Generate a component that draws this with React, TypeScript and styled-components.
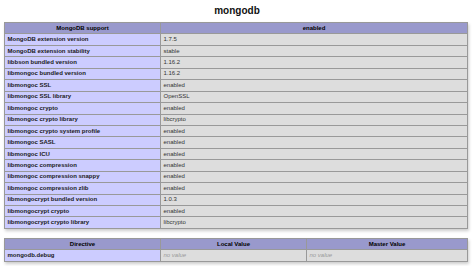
import styled, { createGlobalStyle } from 'styled-components';

const GlobalStyle = createGlobalStyle`
  html, body {
    margin: 0;
    padding: 0;
    background: #fff;
  }
  body {
    font-family: 'Liberation Sans', Arial, Helvetica, sans-serif;
    color: #222;
  }
`;

const rows: [string, string][] = [
  ['MongoDB extension version', '1.7.5'],
  ['MongoDB extension stability', 'stable'],
  ['libbson bundled version', '1.16.2'],
  ['libmongoc bundled version', '1.16.2'],
  ['libmongoc SSL', 'enabled'],
  ['libmongoc SSL library', 'OpenSSL'],
  ['libmongoc crypto', 'enabled'],
  ['libmongoc crypto library', 'libcrypto'],
  ['libmongoc crypto system profile', 'enabled'],
  ['libmongoc SASL', 'enabled'],
  ['libmongoc ICU', 'enabled'],
  ['libmongoc compression', 'enabled'],
  ['libmongoc compression snappy', 'enabled'],
  ['libmongoc compression zlib', 'enabled'],
  ['libmongocrypt bundled version', '1.0.3'],
  ['libmongocrypt crypto', 'enabled'],
  ['libmongocrypt crypto library', 'libcrypto'],
];

export default function App() {
  return (
    <Page>
      <GlobalStyle />
      <Title>mongodb</Title>
      <InfoTable>
        <tbody>
          <Row>
            <HeadCell $w={156}>MongoDB support</HeadCell>
            <HeadCell>enabled</HeadCell>
          </Row>
          {rows.map(([key, value]) => (
            <Row key={key}>
              <KeyCell $w={156}>{key}</KeyCell>
              <ValueCell>{value}</ValueCell>
            </Row>
          ))}
        </tbody>
      </InfoTable>
      <InfoTable>
        <tbody>
          <Row>
            <HeadCell $w={156}>Directive</HeadCell>
            <HeadCell $w={146}>Local Value</HeadCell>
            <HeadCell>Master Value</HeadCell>
          </Row>
          <Row>
            <KeyCell $w={156}>mongodb.debug</KeyCell>
            <ValueCell>
              <NoValue>no value</NoValue>
            </ValueCell>
            <ValueCell>
              <NoValue>no value</NoValue>
            </ValueCell>
          </Row>
        </tbody>
      </InfoTable>
    </Page>
  );
}

const Page = styled.div`
  width: 474px;
  height: 266px;
  overflow: hidden;
  display: flex;
  flex-direction: column;
  align-items: flex-start;
`;

const Title = styled.h2`
  align-self: center;
  margin: 4px 0 4px;
  height: 14px;
  font-size: 10px;
  line-height: 14px;
  font-weight: bold;
  color: #111;
`;

const InfoTable = styled.table`
  width: 464px;
  margin: 0 0 9px 4px;
  border-collapse: collapse;
  border: 0;
  table-layout: fixed;
  box-shadow: 1px 2px 3px #ccc;
`;

const Row = styled.tr`
  height: 11.44px;
`;

const Cell = styled.td<{ $w?: number }>`
  ${(p) => (p.$w ? `width: ${p.$w - 6}px;` : '')}
  border: 1px solid #999;
  padding: 0 2.5px;
  font-size: 6px;
  line-height: 9px;
  vertical-align: middle;
  white-space: nowrap;
  overflow: hidden;
`;

const HeadCell = styled(Cell).attrs({ as: 'th' })`
  background: #9999cc;
  color: #000;
  font-weight: bold;
  text-align: center;
`;

const KeyCell = styled(Cell)`
  background: #ccccff;
  color: #1a1a1a;
  font-weight: bold;
  text-align: left;
`;

const ValueCell = styled(Cell)`
  background: #dddddd;
  color: #333;
  text-align: left;
`;

const NoValue = styled.i`
  color: #999;
`;
